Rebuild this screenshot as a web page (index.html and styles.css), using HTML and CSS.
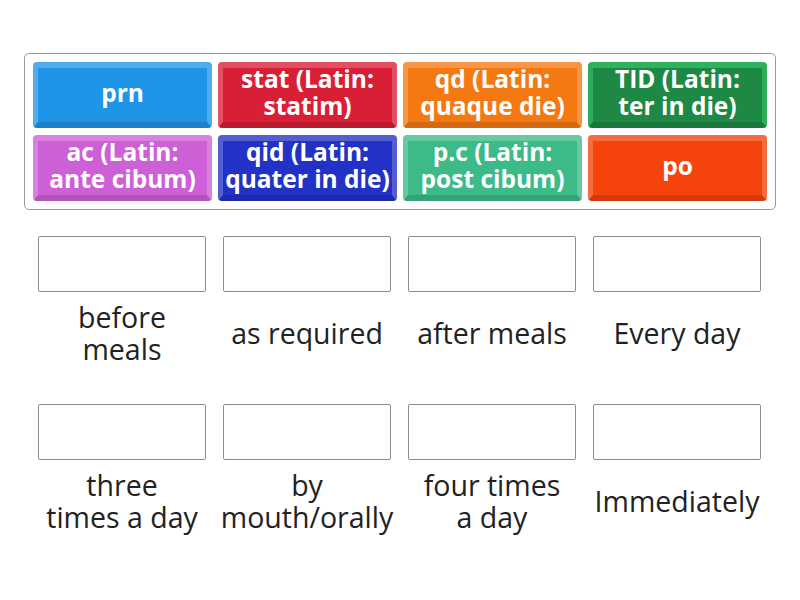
FILE: index.html
```
<!DOCTYPE html>
<html>
<head>
<meta charset="utf-8">
<link rel="stylesheet" href="styles.css">
</head>
<body>
<div class="bank">
  <div class="tile c-blue">prn</div>
  <div class="tile c-red">stat (Latin: statim)</div>
  <div class="tile c-orange">qd (Latin: quaque die)</div>
  <div class="tile c-green">TID (Latin: ter in die)</div>
  <div class="tile c-violet">ac (Latin: ante cibum)</div>
  <div class="tile c-navy">qid (Latin: quater in die)</div>
  <div class="tile c-teal">p.c (Latin: post cibum)</div>
  <div class="tile c-fire">po</div>
</div>
<div class="targets">
  <div class="cell"><div class="drop"></div><div class="label">before<br>meals</div></div>
  <div class="cell"><div class="drop"></div><div class="label">as required</div></div>
  <div class="cell"><div class="drop"></div><div class="label">after meals</div></div>
  <div class="cell"><div class="drop"></div><div class="label">Every day</div></div>
  <div class="cell"><div class="drop"></div><div class="label">three<br>times a day</div></div>
  <div class="cell"><div class="drop"></div><div class="label">by<br>mouth/orally</div></div>
  <div class="cell"><div class="drop"></div><div class="label">four times<br>a day</div></div>
  <div class="cell"><div class="drop"></div><div class="label">Immediately</div></div>
</div>
</body>
</html>
```

FILE: styles.css
```
html, body {
  margin: 0;
  padding: 0;
  background: #ffffff;
}
body {
  font-family: "Open Sans", "DejaVu Sans", sans-serif;
  width: 800px;
  height: 600px;
  overflow: hidden;
}
.bank {
  margin: 53px 0 0 24px;
  width: 734px;
  border: 1px solid #9a9a9a;
  border-radius: 5px;
  padding: 8px;
  display: grid;
  grid-template-columns: repeat(4, 179px);
  grid-auto-rows: 66px;
  column-gap: 6px;
  row-gap: 7px;
}
.tile {
  box-sizing: border-box;
  border-radius: 4px;
  border-style: solid;
  border-width: 6px 5px 6px 5px;
  border-color: rgba(255,255,255,0.22);
  border-bottom-color: rgba(0,0,0,0.13);
  color: #ffffff;
  font-weight: 700;
  font-size: 24.5px;
  line-height: 27px;
  text-align: center;
  display: flex;
  align-items: center;
  justify-content: center;
  padding: 0 2px 6px;
}
.c-blue { background: #1f95e8; }
.c-red { background: #d81f36; }
.c-orange { background: #f57912; }
.c-green { background: #1e8944; border-top-color: rgba(80,255,140,0.35); border-left-color: rgba(80,255,140,0.3); border-right-color: rgba(80,255,140,0.3); }
.c-violet { background: #cd5fd7; }
.c-navy { background: #2231c6; }
.c-teal { background: #3cba87; }
.c-fire { background: #f4430b; }

.targets {
  margin: 26px 0 0 38px;
  display: grid;
  grid-template-columns: repeat(4, 168px);
  column-gap: 17px;
  row-gap: 26px;
}
.cell {
  display: flex;
  flex-direction: column;
}
.drop {
  box-sizing: border-box;
  height: 56px;
  border: 1px solid #8c8c8c;
  border-radius: 2px;
  background: #ffffff;
}
.label {
  box-sizing: border-box;
  height: 86px;
  padding-bottom: 5px;
  margin: 0 -9px;
  display: flex;
  align-items: center;
  justify-content: center;
  text-align: center;
  font-size: 28.5px;
  line-height: 32px;
  color: #222222;
}
```
